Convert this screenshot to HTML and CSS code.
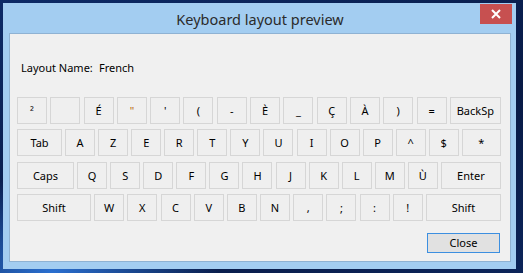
FILE: index.html
```html
<!DOCTYPE html>
<html lang="fr">
<head>
  <meta charset="UTF-8" />
  <title>Keyboard layout preview</title>
  <link rel="stylesheet" href="styles.css">
</head>
<body>
  <div class="window">
    <div class="titlebar">
      <div class="title">Keyboard layout preview</div>
      <div class="close-x">
        <svg width="10" height="10" viewBox="0 0 10 10">
          <path d="M1 1 L9 9 M9 1 L1 9" stroke="#fff" stroke-width="2" />
        </svg>
      </div>
    </div>

    <div class="client">
      <div class="layout-name">
        <span class="label">Layout Name:</span>
        <span class="value">French</span>
      </div>

      <div class="keyboard">
        <div class="row">
          <button class="key">²</button>
          <button class="key"></button>
          <button class="key">É</button>
          <button class="key quote">"</button>
          <button class="key">'</button>
          <button class="key">(</button>
          <button class="key">-</button>
          <button class="key">È</button>
          <button class="key">_</button>
          <button class="key">Ç</button>
          <button class="key">À</button>
          <button class="key">)</button>
          <button class="key">=</button>
          <button class="key backsp">BackSp</button>
        </div>
        <div class="row">
          <button class="key tab">Tab</button>
          <button class="key">A</button>
          <button class="key">Z</button>
          <button class="key">E</button>
          <button class="key">R</button>
          <button class="key">T</button>
          <button class="key">Y</button>
          <button class="key">U</button>
          <button class="key">I</button>
          <button class="key">O</button>
          <button class="key">P</button>
          <button class="key">^</button>
          <button class="key">$</button>
          <button class="key star">*</button>
        </div>
        <div class="row">
          <button class="key caps">Caps</button>
          <button class="key">Q</button>
          <button class="key">S</button>
          <button class="key">D</button>
          <button class="key">F</button>
          <button class="key">G</button>
          <button class="key">H</button>
          <button class="key">J</button>
          <button class="key">K</button>
          <button class="key">L</button>
          <button class="key">M</button>
          <button class="key">Ù</button>
          <button class="key enter">Enter</button>
        </div>
        <div class="row">
          <button class="key lshift">Shift</button>
          <button class="key">W</button>
          <button class="key">X</button>
          <button class="key">C</button>
          <button class="key">V</button>
          <button class="key">B</button>
          <button class="key">N</button>
          <button class="key">,</button>
          <button class="key">;</button>
          <button class="key">:</button>
          <button class="key">!</button>
          <button class="key rshift">Shift</button>
        </div>
      </div>

      <div class="footer">
        <button class="close-btn">Close</button>
      </div>
    </div>
  </div>
</body>
</html>
```

FILE: styles.css
```css
:root {
  --desk: #0b1f52;
  --frame: #a3cdf1;
  --client-bg: #f0f0f0;
  --key-border: #d6d6d6;
  --text: #000;
}

* {
  margin: 0;
  padding: 0;
  box-sizing: border-box;
}

html, body {
  height: 100%;
}

body {
  background: radial-gradient(ellipse at 10% 100%, #2a6fd0 0%, transparent 25%),
              linear-gradient(160deg, #0d2a66, #081a45 60%, #0c2459);
  font-family: "Noto Sans", "Open Sans", sans-serif;
  padding: 3px 0 0 3px;
  overflow: hidden;
}

.window {
  width: 513px;
  height: 266px;
  background: var(--frame);
  padding: 0 5px 7px 6px;
  display: flex;
  flex-direction: column;
  position: relative;
}

.titlebar {
  height: 30px;
  display: flex;
  align-items: center;
  justify-content: center;
}

.title {
  font-family: "Noto Sans", sans-serif;
  font-size: 14.5px;
  color: #2b2b2b;
  margin-top: 1px;
}

.close-x {
  position: absolute;
  top: 1px;
  right: 4px;
  width: 32px;
  height: 20px;
  background: #c75050;
  display: flex;
  align-items: center;
  justify-content: center;
}

.client {
  flex: 1;
  background: var(--client-bg);
  border: 1px solid #8fb2d3;
  padding: 26px 9px 8px 7px;
  display: flex;
  flex-direction: column;
}

.layout-name {
  height: 14px;
  display: flex;
  align-items: center;
  font-size: 11px;
  color: var(--text);
  padding-left: 4px;
  margin-bottom: 23px;
}

.layout-name .label {
  width: 78px;
}

.keyboard {
  display: flex;
  flex-direction: column;
  gap: 5.33px;
}

.row {
  display: flex;
  justify-content: space-between;
}

.key {
  width: 30px;
  height: 27px;
  background: #efefef;
  border: 1px solid var(--key-border);
  font-family: "Noto Sans", sans-serif;
  font-size: 11px;
  color: var(--text);
  display: flex;
  align-items: center;
  justify-content: center;
}

.key.quote {
  color: #b8690f;
}

.backsp { width: 51px; }
.tab { width: 45px; }
.star { width: 39px; }
.caps { width: 57px; }
.enter { width: 60px; }
.lshift { width: 74px; }
.rshift { width: 75px; }

.footer {
  margin-top: 12px;
  display: flex;
  justify-content: flex-end;
  padding-right: 1px;
}

.close-btn {
  width: 73px;
  height: 20px;
  background: #e1e1e1;
  border: 1px solid #3c8fe0;
  font-family: "Noto Sans", sans-serif;
  font-size: 11px;
  color: var(--text);
}
```
